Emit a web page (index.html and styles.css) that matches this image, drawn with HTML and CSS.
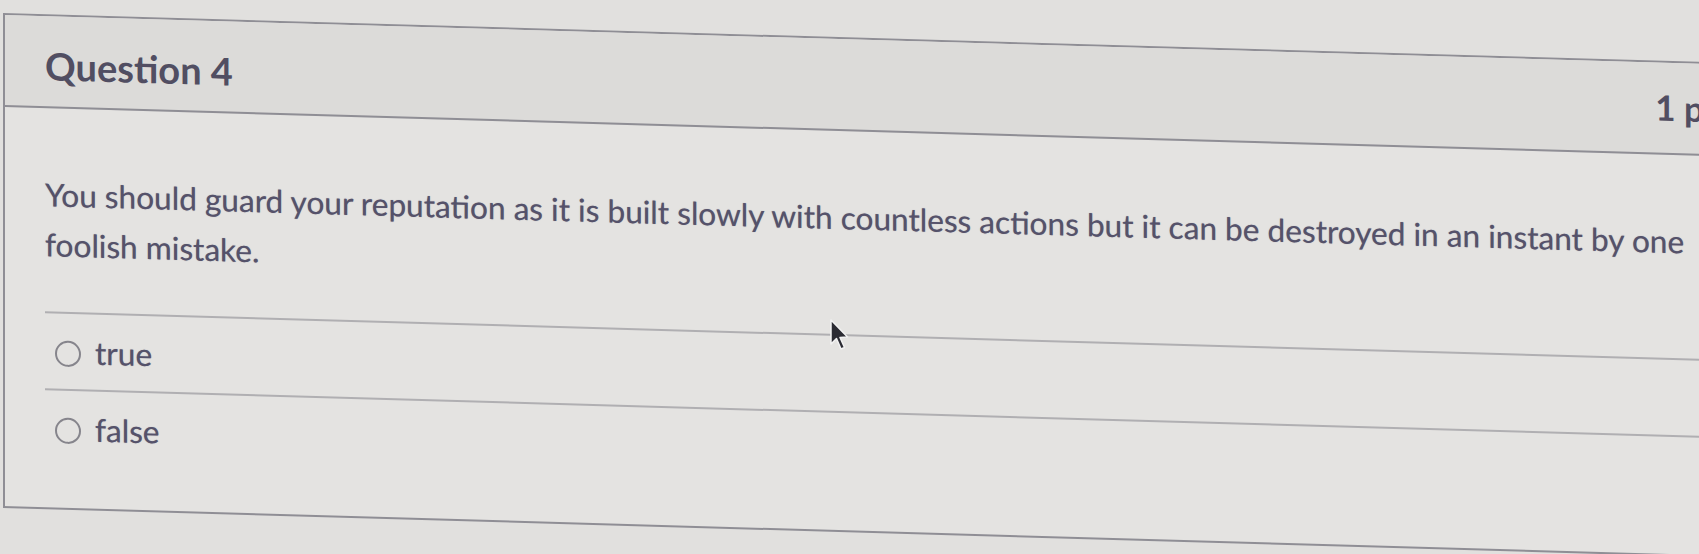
FILE: index.html
```html
<!DOCTYPE html>
<html lang="en">
<head>
<meta charset="utf-8">
<title>Question 4</title>
<link rel="stylesheet" href="styles.css">
</head>
<body>
<div class="page">
  <div class="card">
    <div class="header">
      <span class="name">Question 4</span>
      <span class="points">1 pts</span>
    </div>
    <div class="body">
      <div class="qtext">You should guard your reputation as it is built slowly with countless actions but it can be destroyed in an instant by one foolish mistake.</div>
      <div class="answers">
        <label class="answer"><span class="radio"></span><span class="atext">true</span></label>
        <label class="answer"><span class="radio"></span><span class="atext">false</span></label>
      </div>
    </div>
  </div>
  <svg class="cursor" width="20" height="34" viewBox="0 0 20 34">
    <path d="M2 1 L2 25 L7.5 19.5 L12 30 L15.5 28.5 L11 18.5 L18.5 18 Z" fill="#2b2b33" stroke="#f2f2f2" stroke-width="1.5" stroke-linejoin="round"/>
  </svg>
</div>
</body>
</html>
```
FILE: styles.css
```css
html, body {
  margin: 0;
  padding: 0;
}
body {
  background: #e1e0de;
  overflow: hidden;
  width: 1699px;
  height: 554px;
  font-family: Lato, "Noto Sans", sans-serif;
  color: #55526a;
}
.page {
  position: relative;
  padding: 13px 0 0 3px;
}
.card {
  width: 1776px;
  border: 2px solid #8f8e95;
  border-right: none;
  background: #e4e3e1;
  transform: skewY(1.65deg);
  transform-origin: 0 0;
}
.header {
  height: 90px;
  background: #dcdbd9;
  border-bottom: 2px solid #8f8e95;
  display: flex;
  align-items: flex-start;
  padding: 0 49px 0 40px;
}
.name {
  font-weight: 700;
  font-size: 38px;
  line-height: 1.2;
  margin-top: 27px;
  color: #514e62;
}
.points {
  margin-left: auto;
  font-weight: 700;
  font-size: 35px;
  line-height: 1.2;
  margin-top: 23px;
  color: #514e62;
}
.body {
  padding: 61px 0 42px 40px;
}
.qtext {
  font-size: 31.6px;
  line-height: 50px;
  width: 1660px;
  text-shadow: 0 0 0.8px rgba(85, 82, 106, 0.6);
}
.answers {
  margin-top: 42px;
}
.answer {
  display: flex;
  align-items: center;
  height: 70px;
  padding-top: 5px;
  border-top: 2px solid #b0afb2;
}
.radio {
  width: 22px;
  height: 22px;
  border: 2.5px solid #86858c;
  border-radius: 50%;
  margin-left: 10px;
  flex: none;
}
.atext {
  font-size: 31.6px;
  margin-left: 14px;
  margin-bottom: 4px;
  text-shadow: 0 0 0.8px rgba(85, 82, 106, 0.6);
}
.cursor {
  position: absolute;
  left: 829px;
  top: 319px;
}
```
